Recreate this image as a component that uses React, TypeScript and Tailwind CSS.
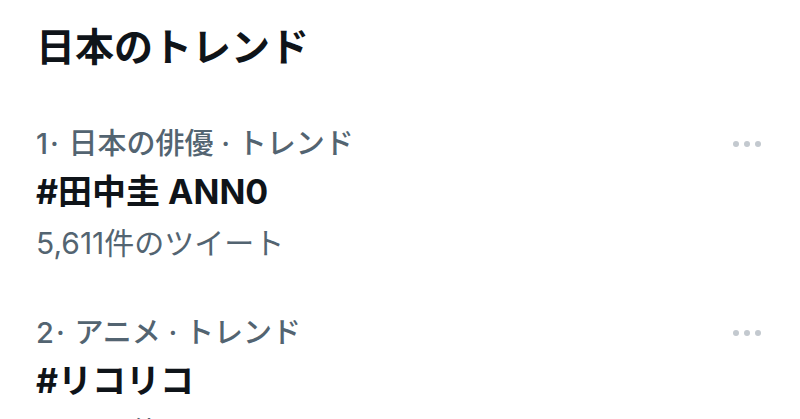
import React from "react";

const font = { fontFamily: "Inter, 'Noto Sans CJK JP', sans-serif" };

function Dots() {
  return (
    <div className="flex items-center gap-[5px]">
      <span className="w-[6px] h-[6px] rounded-full bg-[#c3c9cf]" />
      <span className="w-[6px] h-[6px] rounded-full bg-[#c3c9cf]" />
      <span className="w-[6px] h-[6px] rounded-full bg-[#c3c9cf]" />
    </div>
  );
}

function Trend({ rank, category, tag, count }: { rank: string; category: string; tag: string; count: string }) {
  return (
    <div className="flex flex-col">
      <div className="flex items-center justify-between">
        <div className="text-[29px] leading-[36px] text-[#536471] font-medium">
          {rank}
          <span className="mx-[2px]">·</span> {category} · トレンド
        </div>
        <Dots />
      </div>
      <div className="mt-[12px] text-[34px] leading-[36px] font-bold text-[#0f1419]">{tag}</div>
      <div className="mt-[15px] text-[30px] leading-[36px] text-[#536471]">{count}</div>
    </div>
  );
}

export default function App() {
  return (
    <div className="w-[800px] h-[419px] overflow-hidden bg-white pl-[36px] pr-[39px]" style={font}>
      <h1 className="pt-[23px] text-[39px] leading-[48px] font-bold text-[#0f1419]">日本のトレンド</h1>
      <div className="mt-[55px] flex flex-col gap-[54px]">
        <Trend rank="1" category="日本の俳優" tag="#田中圭 ANN0" count="5,611件のツイート" />
        <Trend rank="2" category="アニメ" tag="#リコリコ" count="10,329件のツイート" />
      </div>
    </div>
  );
}
